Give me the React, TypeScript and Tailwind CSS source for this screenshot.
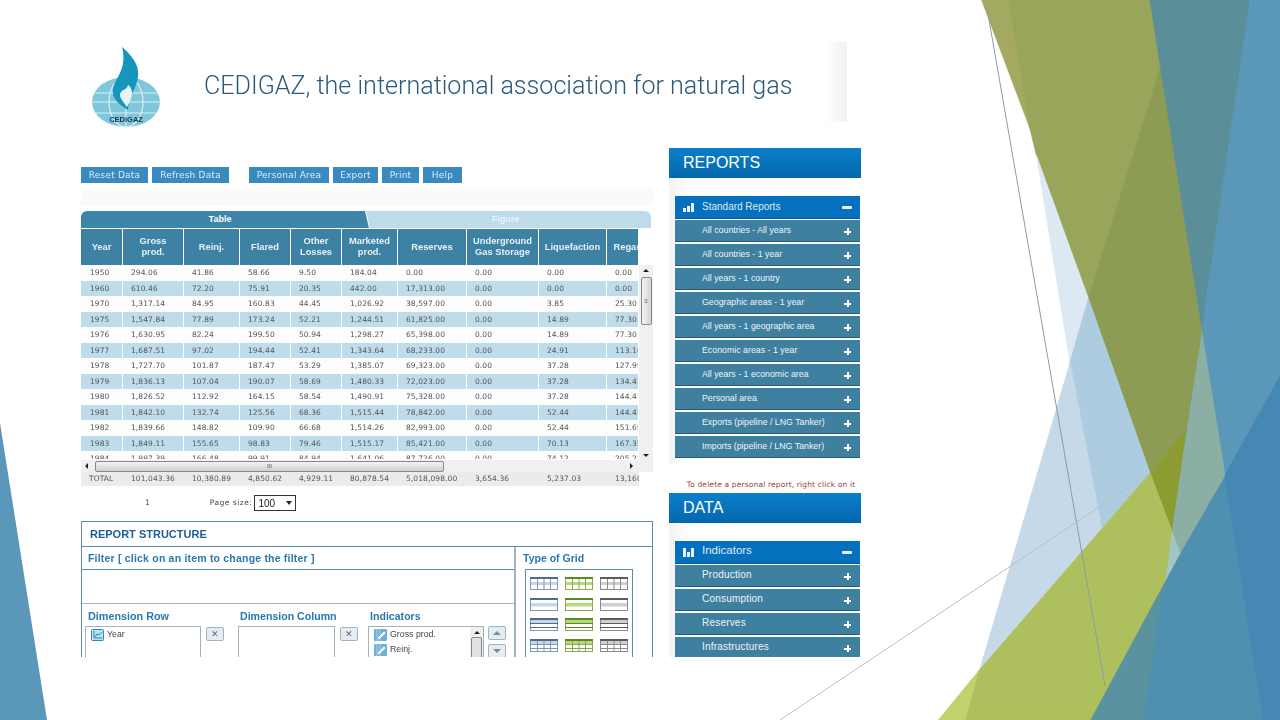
import React from "react";

const rows = [
  ["1950","294.06","41.86","58.66","9.50","184.04","0.00","0.00","0.00","0.00"],
  ["1960","610.46","72.20","75.91","20.35","442.00","17,313.00","0.00","0.00","0.00"],
  ["1970","1,317.14","84.95","160.83","44.45","1,026.92","38,597.00","0.00","3.85","25.30"],
  ["1975","1,547.84","77.89","173.24","52.21","1,244.51","61,825.00","0.00","14.89","77.30"],
  ["1976","1,630.95","82.24","199.50","50.94","1,298.27","65,398.00","0.00","14.89","77.30"],
  ["1977","1,687.51","97.02","194.44","52.41","1,343.64","68,233.00","0.00","24.91","113.10"],
  ["1978","1,727.70","101.87","187.47","53.29","1,385.07","69,323.00","0.00","37.28","127.99"],
  ["1979","1,836.13","107.04","190.07","58.69","1,480.33","72,023.00","0.00","37.28","134.47"],
  ["1980","1,826.52","112.92","164.15","58.54","1,490.91","75,328.00","0.00","37.28","144.47"],
  ["1981","1,842.10","132.74","125.56","68.36","1,515.44","78,842.00","0.00","52.44","144.47"],
  ["1982","1,839.66","148.82","109.90","66.68","1,514.26","82,993.00","0.00","52.44","151.69"],
  ["1983","1,849.11","155.65","98.83","79.46","1,515.17","85,421.00","0.00","70.13","167.35"],
  ["1984","1,997.39","166.48","99.91","84.94","1,641.06","87,726.00","0.00","74.12","205.23"],
];
const total = ["TOTAL","101,043.36","10,380.89","4,850.62","4,929.11","80,878.54","5,018,098.00","3,654.36","5,237.03","13,160"];
const heads = ["Year","Gross\nprod.","Reinj.","Flared","Other\nLosses","Marketed\nprod.","Reserves","Underground\nGas Storage","Liquefaction","Regas"];
const cols = "grid grid-cols-[42px_61px_56px_51px_51px_56px_69px_72px_68px_32px]";
const reports = ["All countries - All years","All countries - 1 year","All years - 1 country","Geographic areas - 1 year","All years - 1 geographic area","Economic areas - 1 year","All years - 1 economic area","Personal area","Exports (pipeline / LNG Tanker)","Imports (pipeline / LNG Tanker)"];
const data = ["Production","Consumption","Reserves","Infrastructures"];

function Background() {
  const P = (points: string, fill: string) => <polygon points={points} fill={fill} stroke={fill} strokeWidth="2" />;
  return (
    <svg className="absolute inset-0" width="1280" height="720" viewBox="0 0 1280 720">
      <polygon points="0,423 47,720 0,720" fill="#5b97b8" />
      <g transform="translate(930 0) scale(0.33333 0.4592)">
        {P("658,0 1050,0 1050,1568 480,1568 705,1265 725,1155", "#4f8fb0")}
        {P("658,0 960,0 815,720", "#5a8f99")}
        {P("960,0 1050,0 1050,820 885,1035 815,720", "#5b97b8")}
        {P("815,720 885,1035 750,1205 725,1155", "#8bafa5")}
        {P("725,1155 750,1205 705,1265", "#a3c6c2")}
        {P("885,1035 1050,820 1050,1568 1000,1568", "#4588b4")}
        {P("705,1265 690,1310 640,1568 480,1568", "#5a939f")}
        {P("155,0 235,0 300,280", "#a4a961")}
        {P("235,0 658,0 690,150 475,650 320,340 300,280", "#9aa55c")}
        {P("690,150 815,720 767,940 660,1030 475,650", "#8c9c55")}
        {P("660,1030 767,940 725,1155", "#8d9c30")}
        {P("320,340 475,650 420,790", "#dce9f3")}
        {P("420,790 475,650 660,1030 515,1150", "#adcce0")}
        {P("105,1568 420,790 515,1150 145,1462", "#c5d9e9")}
        {P("145,1462 660,1030 725,1155 705,1265 480,1568 105,1568", "#aec05d")}
        {P("25,1568 145,1462 105,1568", "#c3d16c")}
      </g>
      <line x1="988" y1="14" x2="1105" y2="686" stroke="#8d9ba6" strokeWidth="1" />
      <line x1="780" y1="720" x2="1150" y2="473" stroke="#b4bfc7" strokeWidth="1" />
    </svg>
  );
}

function Logo() {
  return (
    <svg width="72" height="88" viewBox="0 0 72 88" className="ml-[9px] shrink-0">
      <ellipse cx="36" cy="60" rx="34" ry="25" fill="#80c7dc" />
      <g fill="none" stroke="#d9f0f6" strokeWidth="1.2">
        <ellipse cx="36" cy="60" rx="17" ry="25" />
        <path d="M4 51h64M2 60h68M6 71h60M36 35v50" />
      </g>
      <path d="M32 5C40 12 50 22 48 35C46 48 40 50 38 68C28 62 22 56 23 48C24 36 38 28 32 5Z" fill="#1597bb" />
      <path d="M38 43C43 46 44 54 37 65C32 58 28 54 31 50C33 47 37 48 38 43Z" fill="#e4f4f8" />
      <text x="36" y="80" textAnchor="middle" fontSize="7.5" fontWeight="700" fill="#16384a" fontFamily="Liberation Sans, sans-serif">CEDIGAZ</text>
    </svg>
  );
}

function GridIcon({ kind, tone }: { kind: number; tone: number }) {
  const dark = ["#4d6d8f", "#5b8a1e", "#5c5c5c"][tone];
  const mid = ["#c8d6e3", "#b9d77f", "#cfcfcf"][tone];
  const line = ["#7f99b3", "#8aa84f", "#8c8c8c"][tone];
  return (
    <svg width="28" height="13" viewBox="0 0 28 13">
      <rect x="0.5" y="0.5" width="27" height="12" fill="#fff" stroke={line} />
      <rect x="0" y="0" width="28" height="2" fill={dark} />
      {kind === 0 && <>
        <rect x="1" y="5" width="26" height="3" fill={mid} />
        <path d="M7.5 2v11M14 2v11M20.5 2v11" stroke={line} />
      </>}
      {kind === 1 && <rect x="1" y="5" width="26" height="3.5" fill={mid} />}
      {kind === 2 && <>
        <rect x="1" y="2" width="26" height="3" fill={mid} />
        <path d="M0 5.5h28M0 9.5h28" stroke={dark} />
      </>}
      {kind === 3 && <>
        <rect x="1" y="2" width="26" height="3" fill={mid} />
        <path d="M0 5.5h28M0 9.5h28M7.5 2v11M14 2v11M20.5 2v11" stroke={line} />
      </>}
    </svg>
  );
}

function Btn({ w, label, cls = "" }: { w: string; label: string; cls?: string }) {
  return <div className={`${w} ${cls} h-[16px] pt-[1px] bg-[#3a8ac2] text-[#dcebf5] text-[9px] tracking-[0.2px] flex items-center justify-center`}>{label}</div>;
}

function Plus({ big }: { big?: boolean }) {
  return big
    ? <div className="w-[10px] h-[3px] bg-[#e8f2f8] rounded-[1px]" />
    : <span className="relative w-[7px] h-[7px] block">
        <span className="absolute left-0 top-[3px] w-[7px] h-[1.5px] bg-white" />
        <span className="absolute left-[3px] top-0 w-[1.5px] h-[7px] bg-white" />
      </span>;
}

function SideItem({ label, large }: { label: string; large?: boolean }) {
  return (
    <div className={`h-[22px] mb-[2px] bg-[#3f7f9f] border-b border-[#1f5b7c] flex items-start pl-[27px] pr-[9px] pt-[4px] justify-between text-[#eef5f8] ${large ? "text-[10px] tracking-[0.2px]" : "text-[8.8px]"}`}>
      <span className={large ? "leading-[11px]" : "leading-[12px]"}>{label}</span>
      <span className="mt-[4px]"><Plus /></span>
    </div>
  );
}

function SideHead({ label, bars, size }: { label: string; bars: number[]; size: string }) {
  return (
    <div className={`h-[23px] mb-[1px] bg-[#0570bd] border-b border-[#035a99] flex items-center pl-[8px] pr-[8px] text-[#dcecf7] ${size}`}>
      <span className="w-[19px] flex items-end gap-[1.5px] h-[9px]">
        {bars.map((b, i) => <span key={i} className="w-[2.5px] bg-[#e8f2f8]" style={{ height: b }} />)}
      </span>
      <span className="flex-1 pb-[2px]">{label}</span>
      <Plus big />
    </div>
  );
}

function Banner({ label }: { label: string }) {
  return (
    <div className="w-[192px] h-[30px] bg-gradient-to-b from-[#0a7fcb] to-[#0467ac] flex items-center pl-[14px] pb-[1px] text-white text-[16px] leading-none">
      {label}
    </div>
  );
}

function ListItem({ label, icon }: { label: string; icon: "row" | "ind" }) {
  return (
    <div className="flex items-center h-[15px] gap-[3px] pl-[5px] text-[8.8px] text-[#444]">
      {icon === "row" ? (
        <svg width="13" height="12" viewBox="0 0 13 12">
          <rect x="0.5" y="0.5" width="12" height="11" rx="1" fill="#bfe0f2" stroke="#2f86bb" />
          <path d="M3 2v7h8" stroke="#2f86bb" fill="none" />
          <path d="M4 8l2-3 2 1 3-3" stroke="#2f86bb" fill="none" />
        </svg>
      ) : (
        <svg width="13" height="12" viewBox="0 0 13 12">
          <rect x="0" y="0" width="13" height="12" rx="1" fill="#6fb0da" />
          <path d="M3 0v12M6 0v12" stroke="#a9d3ec" />
          <path d="M5 11l7-7-2-2-7 7z" fill="#f4f8fb" stroke="#7a8c99" strokeWidth="0.5" />
        </svg>
      )}
      {label}
    </div>
  );
}

function SquareBtn({ children, cls = "" }: { children: React.ReactNode; cls?: string }) {
  return <div className={`w-[18px] h-[14px] border border-[#9fb4c2] rounded-[2px] bg-[#e6edf2] flex items-center justify-center text-[#667] text-[9px] leading-none ${cls}`}>{children}</div>;
}

export default function App() {
  return (
    <div className="relative w-[1280px] h-[720px] overflow-hidden bg-white font-['Liberation_Sans',sans-serif]">
      <Background />
      <div className="relative pl-[81px] pt-[42px] blur-[0.35px]">
        <div className="w-[766px] h-[80px] flex items-start bg-gradient-to-r from-white from-[97%] to-[#f1f1f1]">
          <Logo />
          <div className="ml-[42px] mt-[26px] text-[25.1px] leading-[36px] text-[#2b5a7e] font-['Roboto',sans-serif] font-light whitespace-nowrap">
            CEDIGAZ, the international association for natural gas
          </div>
        </div>

        <div className="mt-[26px] h-[509px] overflow-hidden flex gap-[16px]">
          <div className="w-[572px] pt-[19px] shrink-0">
            <div className="flex font-['DejaVu_Sans',sans-serif]">
              <Btn w="w-[67px]" label="Reset Data" />
              <Btn w="w-[77px]" cls="ml-[4px]" label="Refresh Data" />
              <Btn w="w-[80px]" cls="ml-[20px]" label="Personal Area" />
              <Btn w="w-[45px]" cls="ml-[4px]" label="Export" />
              <Btn w="w-[37px]" cls="ml-[4px]" label="Print" />
              <Btn w="w-[39px]" cls="ml-[4px]" label="Help" />
            </div>
            <div className="mt-[5px] h-[18px] bg-[#fafafa]" />
            <div className="mt-[5px] flex h-[17px]">
              <div className="w-[288px] pr-[10px] pt-[1px] bg-[#3d85a8] rounded-tl-[6px] [clip-path:polygon(0_0,284px_0,288px_100%,0_100%)] text-white text-[9px] font-bold flex items-center justify-center">Table</div>
              <div className="w-[285px] pr-[6px] pt-[1px] -ml-[3px] bg-[#bddbe9] rounded-tr-[6px] [clip-path:polygon(0_0,100%_0,100%_100%,4px_100%)] text-[#e9f3f8] text-[9px] font-bold flex items-center justify-center">Figure</div>
            </div>
            <div className="flex h-[245px]">
              <div className="w-[558px] shrink-0">
                <div className={`${cols} h-[36px] mt-px overflow-hidden`}>
                  {heads.map((h) => (
                    <div key={h} className="bg-[#3d82a5] border-r border-white text-[#e6f1f6] text-[9.3px] font-bold leading-[11px] text-center flex items-center justify-center whitespace-pre-line overflow-hidden">
                      <span className={h === "Regas" ? "whitespace-nowrap pl-[10px]" : ""}>{h}</span>
                    </div>
                  ))}
                </div>
                <div className="h-[194px] overflow-hidden font-['DejaVu_Sans',sans-serif]">
                  {rows.map((r, i) => (
                    <div key={r[0]} className={`${cols} h-[15.5px] ${i % 2 ? "bg-[#bfdcea]" : "bg-[#fdfdfd]"}`}>
                      {r.map((c, j) => (
                        <div key={j} className={`text-[7.5px] tracking-[0.1px] leading-[15.5px] text-[#555] whitespace-nowrap overflow-hidden border-r border-white ${j === 0 ? "pl-[9px]" : "pl-[8px]"}`}>{c}</div>
                      ))}
                    </div>
                  ))}
                </div>
                <div className={`${cols} h-[14px] mt-[13px] bg-[#ebebeb] font-['DejaVu_Sans',sans-serif]`}>
                  {total.map((c, j) => (
                    <div key={j} className="text-[7.5px] tracking-[0.1px] leading-[14px] text-[#555] whitespace-nowrap overflow-hidden pl-[8px]">{c}</div>
                  ))}
                </div>
              </div>
              <div className="w-[14px] h-[207px] mt-[37px] bg-[#f0f0f0] flex flex-col items-center">
                <span className="mt-[4px] w-0 h-0 border-x-[3px] border-x-transparent border-b-[3px] border-b-[#222]" />
                <div className="mt-[5px] w-[11px] h-[48px] border border-[#888] rounded-[2px] bg-gradient-to-r from-[#f4f4f4] to-[#d5d5d5] flex items-center justify-center text-[6px] text-[#555]">≡</div>
                <span className="mt-auto mb-[15px] w-0 h-0 border-x-[3px] border-x-transparent border-t-[3px] border-t-[#222]" />
              </div>
            </div>
            <div className="-mt-[13px] relative h-[12px] w-[572px] bg-[#f0f0f0] flex items-center">
              <span className="ml-[4px] w-0 h-0 border-y-[3px] border-y-transparent border-r-[3px] border-r-[#222]" />
              <div className="ml-[7px] w-[349px] h-[11px] border border-[#888] rounded-[2px] bg-gradient-to-b from-[#f4f4f4] to-[#cfcfcf] flex items-center justify-center text-[6px] text-[#555]">III</div>
              <span className="ml-[186px] w-0 h-0 border-y-[3px] border-y-transparent border-l-[3px] border-l-[#222]" />
            </div>

            <div className="mt-[23px] flex items-center font-['DejaVu_Sans',sans-serif] text-[7.5px] text-[#444] h-[16px]">
              <span className="ml-[64px]">1</span>
              <span className="ml-[60px] tracking-[0.5px]">Page size:</span>
              <div className="ml-[2px] w-[42px] h-[16px] border border-[#333] flex items-center justify-between px-[3px] text-[10px] text-[#222] font-['Liberation_Sans',sans-serif]">
                100
                <span className="w-0 h-0 border-x-[3.5px] border-x-transparent border-t-[4px] border-t-[#222]" />
              </div>
            </div>

            <div className="mt-[10px] w-[572px] border border-b-0 border-[#5f8ca3] h-[140px]">
              <div className="h-[25px] border-b border-[#5f8ca3] pl-[8px] flex items-center text-[11px] font-bold text-[#1c5f98]">REPORT STRUCTURE</div>
              <div className="flex h-[115px]">
                <div className="w-[434px] shrink-0 border-r-2 border-[#9db4c1]">
                  <div className="h-[22px] pl-[6px] pt-[2px] flex items-center text-[10.5px] font-bold text-[#2a78ae] tracking-[0.2px]">Filter [ click on an item to change the filter ]</div>
                  <div className="h-[35px] border-y border-y-[#5f8ca3] border-b-[#9db4c1] bg-white" />
                  <div className="flex pt-[5px]">
                    <div className="w-[152px] shrink-0 pl-[3px]">
                      <div className="pl-[3px] text-[10.8px] font-bold text-[#2a78ae] leading-[14px]">Dimension Row</div>
                      <div className="flex mt-[3px] items-start gap-[5px]">
                        <div className="w-[116px] h-[60px] border border-[#9db4c1] bg-white"><ListItem label="Year" icon="row" /></div>
                        <SquareBtn cls="mt-[1px]">✕</SquareBtn>
                      </div>
                    </div>
                    <div className="w-[134px] shrink-0 pl-[4px]">
                      <div className="pl-[2px] text-[10.6px] font-bold text-[#2a78ae] leading-[14px] whitespace-nowrap">Dimension Column</div>
                      <div className="flex mt-[3px] items-start gap-[5px]">
                        <div className="w-[97px] h-[60px] border border-[#9db4c1] bg-white" />
                        <SquareBtn cls="mt-[1px]">✕</SquareBtn>
                      </div>
                    </div>
                    <div className="flex-1">
                      <div className="pl-[2px] text-[10.6px] font-bold text-[#2a78ae] leading-[14px]">Indicators</div>
                      <div className="flex mt-[3px] items-start gap-[4px]">
                        <div className="w-[116px] h-[60px] shrink-0 border border-[#9db4c1] bg-white relative">
                          <ListItem label="Gross prod." icon="ind" />
                          <ListItem label="Reinj." icon="ind" />
                          <div className="absolute right-0 top-0 bottom-0 w-[13px] bg-[#f0f0f0] flex flex-col items-center">
                            <span className="mt-[4px] w-0 h-0 border-x-[3px] border-x-transparent border-b-[3px] border-b-[#222]" />
                            <div className="mt-[3px] w-[11px] h-[30px] border border-[#888] rounded-[2px] bg-[#e2e2e2]" />
                          </div>
                        </div>
                        <div className="flex flex-col gap-[4px]">
                          <SquareBtn><span className="w-0 h-0 border-x-[4px] border-x-transparent border-b-[4px] border-b-[#7a8c99]" /></SquareBtn>
                          <SquareBtn><span className="w-0 h-0 border-x-[4px] border-x-transparent border-t-[4px] border-t-[#7a8c99]" /></SquareBtn>
                        </div>
                      </div>
                    </div>
                  </div>
                </div>
                <div className="flex-1 pl-[7px]">
                  <div className="h-[22px] pt-[2px] flex items-center text-[10.5px] font-bold text-[#2a78ae]">Type of Grid</div>
                  <div className="ml-[2px] w-[108px] h-[100px] border border-[#5f8ca3] bg-white grid grid-cols-[28px_28px_28px] gap-x-[7px] gap-y-[7.5px] pl-[4px] pt-[7px] content-start">
                    {[0, 1, 2, 3].map((k) => [0, 1, 2].map((t) => <GridIcon key={`${k}${t}`} kind={k} tone={t} />))}
                  </div>
                </div>
              </div>
            </div>
          </div>

          <div className="w-[192px] shrink-0">
            <Banner label="REPORTS" />
            <div className="bg-gradient-to-r from-[#f3f3f3] from-0% to-white to-[12%] pl-[6px] pr-px pt-[18px] h-[285px]">
              <SideHead label="Standard Reports" bars={[4, 6, 9]} size="text-[10px]" />
              {reports.map((r) => <SideItem key={r} label={r} />)}
            </div>
            <div className="h-[30px] flex items-end pb-[3px] justify-center text-[7.5px] text-[#a23a3a] tracking-[0.15px] font-['DejaVu_Sans',sans-serif] bg-white whitespace-nowrap w-[192px]">
              <span className="ml-[12px]">To delete a personal report, right click on it</span>
            </div>
            <Banner label="DATA" />
            <div className="bg-gradient-to-r from-[#f3f3f3] from-0% to-white to-[12%] pl-[6px] pr-px pt-[18px] h-[140px]">
              <SideHead label="Indicators" bars={[9, 5, 9]} size="text-[11.5px]" />
              {data.map((r) => <SideItem key={r} label={r} large />)}
            </div>
          </div>
        </div>
      </div>
    </div>
  );
}
